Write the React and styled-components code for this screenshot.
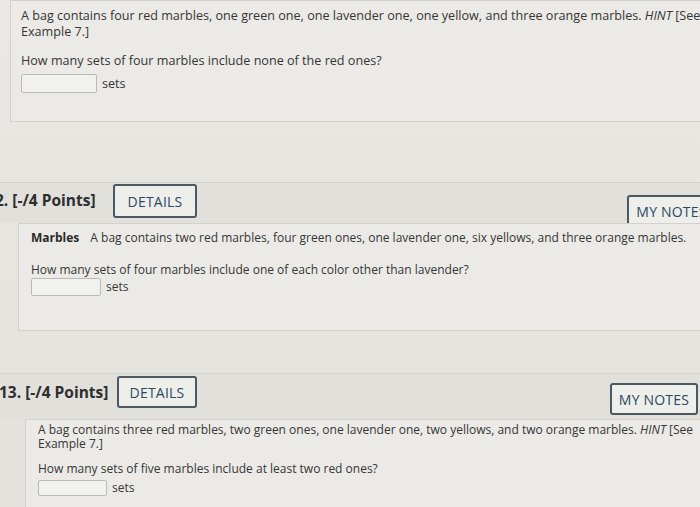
import React from "react";
import styled, { createGlobalStyle } from "styled-components";

const GlobalStyle = createGlobalStyle`
    html, body {
        margin: 0;
        padding: 0;
        background: #e6e5e0;
        overflow: hidden;
    }
    body {
        font-family: "Open Sans", "DejaVu Sans", sans-serif;
        color: #3a3a3a;
    }
`;

const Page = styled.div`
    width: 700px;
    height: 507px;
    overflow: hidden;
    display: flex;
    flex-direction: column;
    align-items: flex-start;
    background: linear-gradient(180deg, #e9e8e3 0%, #e5e4df 60%, #e2e1dc 100%);
`;

const Question = styled.section`
    display: flex;
    flex-direction: column;
    flex-shrink: 0;
    width: ${(p) => p.$width}px;
    margin-top: ${(p) => p.$gap}px;
`;

const Header = styled.div`
    display: flex;
    align-items: flex-start;
    border-top: 1px solid #d4d3ce;
    background: #e1e0db;
    height: ${(p) => p.$height}px;
    padding-right: 2px;
    box-sizing: border-box;
`;

const Label = styled.div`
    font-weight: 700;
    font-size: 15.5px;
    color: #2e2e2e;
    width: ${(p) => p.$width}px;
    margin-top: ${(p) => p.$top}px;
    margin-left: ${(p) => p.$left}px;
    white-space: nowrap;
`;

const Button = styled.div`
    box-sizing: border-box;
    display: flex;
    align-items: center;
    justify-content: center;
    flex-shrink: 0;
    border: 2px solid #4b5965;
    border-radius: 3px;
    background: #eeeeeb;
    color: #294a63;
    font-size: 14px;
    letter-spacing: 0.2px;
    width: ${(p) => p.$w}px;
    height: ${(p) => p.$h}px;
    margin-top: ${(p) => p.$top || 0}px;
    white-space: nowrap;
    overflow: hidden;
`;

const Spacer = styled.div`
    flex: 1;
`;

const Body = styled.div`
    margin-left: ${(p) => p.$indent}px;
    border: 1px solid #d2d1cc;
    border-right: none;
    background: #ebeae6;
    box-sizing: border-box;
    height: ${(p) => p.$height}px;
    padding: ${(p) => p.$pad};
    font-size: ${(p) => p.$size}px;
    line-height: ${(p) => p.$line}px;
    color: #363636;
`;

const Para = styled.p`
    margin: 0 0 ${(p) => p.$after}px 0;
    b {
        font-weight: 700;
        color: #2a2a2a;
        margin-right: 11px;
    }
`;

const AnswerRow = styled.div`
    display: flex;
    align-items: center;
    gap: 5px;
`;

const Input = styled.div`
    width: ${(p) => p.$w}px;
    height: ${(p) => p.$h}px;
    box-sizing: border-box;
    border: 1px solid #b9b9b5;
    border-radius: 2px;
    background: #f1f1ee;
`;

const TopStub = styled.div`
    display: flex;
    justify-content: flex-end;
    align-self: stretch;
    height: 6px;
    overflow: hidden;
    align-items: flex-end;
`;

const StubButton = styled.div`
    width: 60px;
    height: 20px;
    border: 2px solid #56626c;
    border-right: none;
    border-radius: 3px 0 0 3px;
    background: #eeeeeb;
`;

export default function App() {
    return (
        <>
            <GlobalStyle />
            <Page>
                <TopStub>
                    <StubButton />
                </TopStub>
                <Question $width={732} $gap={0}>
                    <Body $indent={10} $height={122} $pad="7px 0 0 10px" $size={12.6} $line={16}>
                        <Para $after={13}>
                            A bag contains four red marbles, one green one, one lavender one, one yellow, and three orange marbles. <i>HINT</i> [See Example 7.]
                        </Para>
                        <Para $after={5}>How many sets of four marbles include none of the red ones?</Para>
                        <AnswerRow>
                            <Input $w={76} $h={19} />
                            <span>sets</span>
                        </AnswerRow>
                    </Body>
                </Question>

                <Question $width={718} $gap={60}>
                    <Header $height={41}>
                        <Label $width={118} $top={6} $left={-5}>2. [-/4 Points]</Label>
                        <Button $w={84} $h={34} $top={1}>DETAILS</Button>
                        <Spacer />
                        <Button $w={89} $h={32} $top={12}>MY NOTES</Button>
                    </Header>
                    <Body $indent={18} $height={108} $pad="6px 0 0 12px" $size={12} $line={16}>
                        <Para $after={16}>
                            <b>Marbles</b>A bag contains two red marbles, four green ones, one lavender one, six yellows, and three orange marbles.
                        </Para>
                        <Para $after={0}>How many sets of four marbles include one of each color other than lavender?</Para>
                        <AnswerRow>
                            <Input $w={70} $h={18} />
                            <span>sets</span>
                        </AnswerRow>
                    </Body>
                </Question>

                <Question $width={700} $gap={42}>
                    <Header $height={46}>
                        <Label $width={118} $top={7} $left={-1}>13. [-/4 Points]</Label>
                        <Button $w={80} $h={32} $top={2}>DETAILS</Button>
                        <Spacer />
                        <Button $w={88} $h={32} $top={9}>MY NOTES</Button>
                    </Header>
                    <Body $indent={25} $height={100} $pad="3px 0 0 12px" $size={12} $line={14}>
                        <Para $after={11}>
                            A bag contains three red marbles, two green ones, one lavender one, two yellows, and two orange marbles. <i>HINT</i> [See Example 7.]
                        </Para>
                        <Para $after={4}>How many sets of five marbles include at least two red ones?</Para>
                        <AnswerRow>
                            <Input $w={69} $h={16} />
                            <span>sets</span>
                        </AnswerRow>
                    </Body>
                </Question>
            </Page>
        </>
    );
}
